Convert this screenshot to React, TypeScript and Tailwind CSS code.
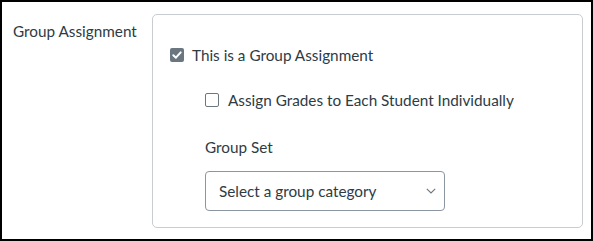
import React from 'react'

const CheckBox = ({ checked }: { checked?: boolean }) => {
  if (checked) {
    return (
      <span className="flex size-[14px] shrink-0 items-center justify-center rounded-[2px] bg-[#6b7780]">
        <svg viewBox="0 0 14 14" className="size-[14px]">
          <path d="M3.3 7.2 L5.9 9.7 L10.7 4.4" fill="none" stroke="#fff" strokeWidth="2" strokeLinecap="round" strokeLinejoin="round" />
        </svg>
      </span>
    )
  }
  return <span className="block size-[14px] shrink-0 rounded-[2px] border border-[#6b7780] bg-white" />
}

export default function App() {
  return (
    <div
      className="flex h-[241px] w-[593px] border-2 border-black bg-white text-[15.3px] text-[#2d3b45]"
      style={{ fontFamily: 'Lato, "Liberation Sans", sans-serif' }}
    >
      <div className="w-[150px] shrink-0 pl-[11px] pt-[17px] leading-6">Group Assignment</div>

      <div className="mr-[8px] mt-[12px] mb-[11px] flex flex-1 flex-col rounded-[5px] border border-[#c7cdd1] pl-[17px] pt-[28px]">
        <label className="flex h-6 items-center gap-2">
          <CheckBox checked />
          <span>This is a Group Assignment</span>
        </label>

        <div className="ml-[35px] flex flex-col">
          <label className="mt-[21px] flex h-6 items-center gap-[9px]">
            <CheckBox />
            <span>Assign Grades to Each Student Individually</span>
          </label>

          <div className="mt-[23px] h-6 leading-6">Group Set</div>

          <div className="mt-[12px] flex h-[40px] w-[240px] items-center justify-between rounded-[4px] border border-[#8b96a0] pl-[13px] pr-[8px]">
            <span>Select a group category</span>
            <svg viewBox="0 0 10 6" className="h-[6px] w-[10px]">
              <path d="M0.8 0.8 L5 5 L9.2 0.8" fill="none" stroke="#6b7780" strokeWidth="1.1" />
            </svg>
          </div>
        </div>
      </div>
    </div>
  )
}
